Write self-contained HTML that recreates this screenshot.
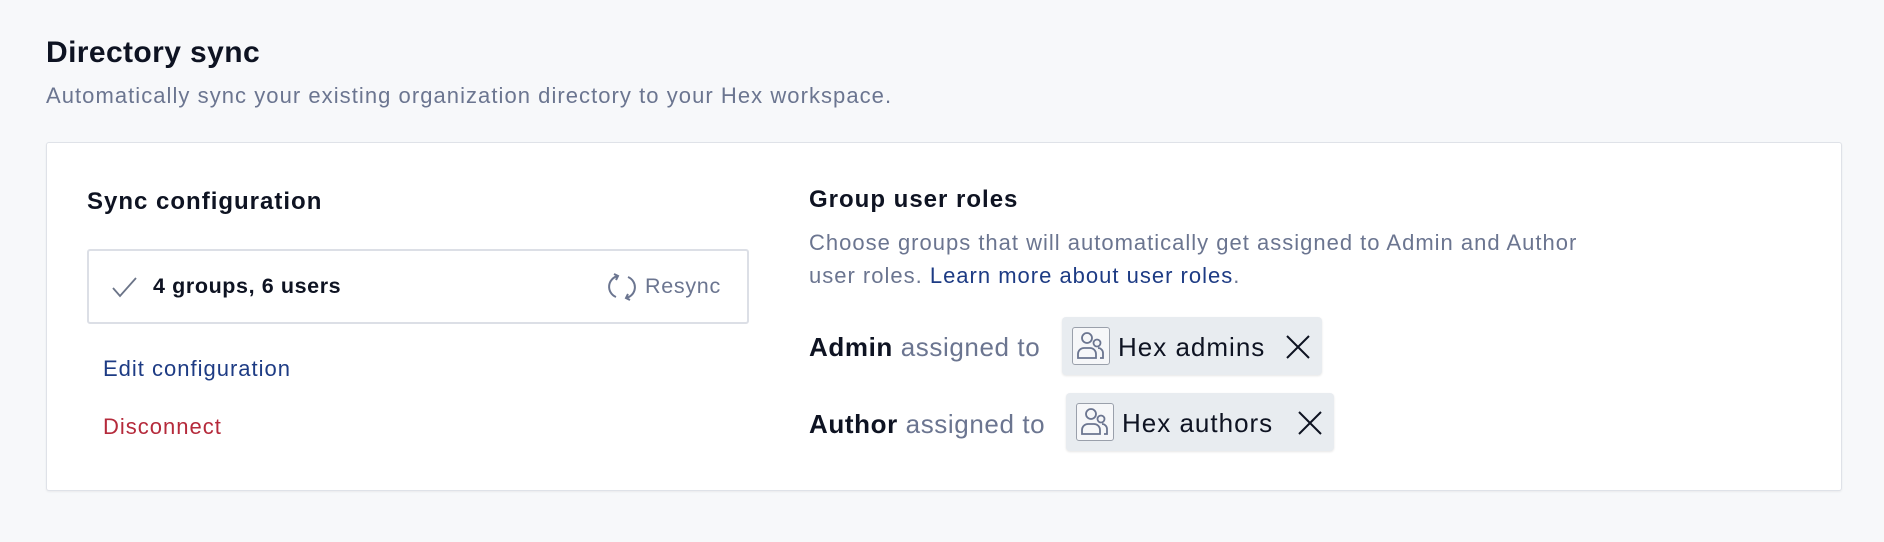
<!DOCTYPE html>
<html><head><meta charset="utf-8"><style>
*{margin:0;padding:0;box-sizing:border-box}
body{width:1884px;height:542px;background:#f7f8fa;font-family:"Liberation Sans",sans-serif;position:relative;overflow:hidden;color:#111827}
.a{position:absolute;white-space:nowrap}
h1{position:absolute;left:46px;top:36px;font-size:30px;font-weight:600;color:#0e1322;letter-spacing:0.4px}
.sub{left:46px;top:83px;font-size:22px;letter-spacing:1.05px;color:#6b7590}
.card{position:absolute;left:46px;top:142px;width:1796px;height:349px;background:#fff;border:1px solid #dfe2e8;border-radius:3px;box-shadow:0 1px 2px rgba(0,0,0,.06)}
.h2{font-size:24px;font-weight:600;color:#0e1322;letter-spacing:1px}
.box{position:absolute;left:87px;top:249px;width:662px;height:75px;border:2px solid #dcdfe6;border-radius:3px;background:#fff}
.t20{font-size:22px;letter-spacing:1px}
.chip{position:absolute;height:58px;background:#e8ecf0;border-radius:4px;box-shadow:0 1px 2px rgba(0,0,0,.1)}
.ic{position:absolute;left:10px;top:10px;width:38px;height:38px;border:1.5px solid #9aa0ab;border-radius:3px;background:#f6f7f9}
.ct{position:absolute;left:56px;top:15px;font-size:26px;letter-spacing:1px;color:#0e1322}
</style></head><body>
<h1>Directory sync</h1>
<div class="a sub">Automatically sync your existing organization directory to your Hex workspace.</div>
<div class="card"></div>
<div class="a h2" style="left:87px;top:188px">Sync configuration</div>
<div class="box">
<svg class="a" style="left:23px;top:25px" width="26" height="22" viewBox="0 0 26 22"><path d="M1 12 L8 20 L24 2" fill="none" stroke="#6b7488" stroke-width="1.8"/></svg>
<div class="a" style="left:64px;top:23px;font-size:21.5px;letter-spacing:0.6px;font-weight:700;color:#0e1322">4 groups, 6 users</div>
<svg class="a" style="left:517px;top:20px" width="32" height="32" viewBox="0 0 32 32" fill="none" stroke="#6b7590" stroke-width="2"><path d="M12 5 A11 11 0 0 0 10 26"/><path d="M8 3 L12 5 L10 9"/><path d="M20 27 A11 11 0 0 0 22 6"/><path d="M24 29 L20 27 L22 23"/></svg>
<div class="a" style="left:556px;top:23px;font-size:21.5px;letter-spacing:0.7px;color:#6b7590">Resync</div>
</div>
<div class="a t20" style="left:103px;top:356px;color:#1d3b84">Edit configuration</div>
<div class="a t20" style="left:103px;top:414px;color:#b52a3b">Disconnect</div>

<div class="a h2" style="left:809px;top:186px">Group user roles</div>
<div class="a t20" style="left:809px;top:226px;color:#6b7590;line-height:33px">Choose groups that will automatically get assigned to Admin and Author<br>user roles. <span style="color:#1d3b84">Learn more about user roles</span>.</div>
<div class="a" style="left:809px;top:332px;font-size:26px;letter-spacing:0.6px;color:#6b7590"><b style="color:#0e1322;font-weight:600">Admin</b> assigned to</div>
<div class="a" style="left:809px;top:409px;font-size:26px;letter-spacing:0.6px;color:#6b7590"><b style="color:#0e1322;font-weight:600">Author</b> assigned to</div>
<div class="chip" style="left:1062px;top:317px;width:260px">
<div class="ic"><svg width="35" height="35" viewBox="0 0 35 35" fill="none" stroke="#6b7590" stroke-width="1.8"><circle cx="14" cy="10" r="5"/><circle cx="24" cy="15" r="3.5"/><path d="M5 30 V26 A6 6 0 0 1 11 20 H17 A6 6 0 0 1 23 26 V30 Z"/><path d="M25 20 A5 5 0 0 1 30 25 V30 H27"/></svg></div>
<div class="ct">Hex admins</div>
<svg class="a" style="left:224px;top:18px" width="24" height="24" viewBox="0 0 24 24" stroke="#0e1322" stroke-width="2"><path d="M1 1 L23 23 M23 1 L1 23"/></svg>
</div>
<div class="chip" style="left:1066px;top:393px;width:268px">
<div class="ic"><svg width="35" height="35" viewBox="0 0 35 35" fill="none" stroke="#6b7590" stroke-width="1.8"><circle cx="14" cy="10" r="5"/><circle cx="24" cy="15" r="3.5"/><path d="M5 30 V26 A6 6 0 0 1 11 20 H17 A6 6 0 0 1 23 26 V30 Z"/><path d="M25 20 A5 5 0 0 1 30 25 V30 H27"/></svg></div>
<div class="ct">Hex authors</div>
<svg class="a" style="left:232px;top:18px" width="24" height="24" viewBox="0 0 24 24" stroke="#0e1322" stroke-width="2"><path d="M1 1 L23 23 M23 1 L1 23"/></svg>
</div>
</body></html>
